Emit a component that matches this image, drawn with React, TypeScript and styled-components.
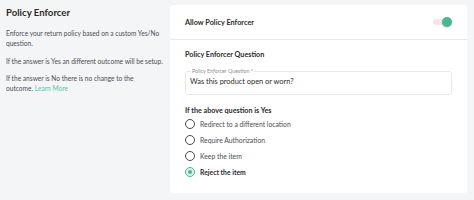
import styled, { createGlobalStyle } from "styled-components"

const colors = {
  page: "#f4f5f7",
  card: "#ffffff",
  text: "#2b2b2b",
  muted: "#4a4e54",
  border: "#e6e8eb",
  teal: "#46b896",
  tealSoft: "#dff3ec",
}

const GlobalStyle = createGlobalStyle`
  html, body {
    margin: 0;
    padding: 0;
    background: ${colors.page};
    font-family: "Lato", "Open Sans", sans-serif;
    color: ${colors.text};
  }
`

const Page = styled.div`
  width: 474px;
  height: 200px;
  display: flex;
  flex-direction: row;
  align-items: flex-start;
  padding: 5px 7px 0 6px;
  box-sizing: border-box;
  overflow: hidden;
`

const Intro = styled.div`
  width: 158px;
  padding-top: 2px;
  margin-right: 6px;
`

const IntroTitle = styled.h1`
  font-size: 9.6px;
  font-weight: 700;
  margin: 0 0 10px;
`

const IntroText = styled.p`
  font-size: 6.6px;
  line-height: 10px;
  color: ${colors.muted};
  margin: 0 0 7.5px;
  white-space: nowrap;
`

const LearnMore = styled.a`
  color: #5cc4a6;
  text-decoration: none;
`

const Card = styled.section`
  flex: 1;
  height: 188px;
  background: ${colors.card};
  border-radius: 3px;
  display: flex;
  flex-direction: column;
`

const CardHeader = styled.div`
  height: 34px;
  padding: 0 15px;
  display: flex;
  align-items: center;
  justify-content: space-between;
  border-bottom: 1px solid ${colors.border};
`

const HeaderTitle = styled.span`
  font-size: 7.3px;
  font-weight: 700;
`

const Toggle = styled.div`
  position: relative;
  width: 19px;
  height: 10px;
  display: flex;
  align-items: center;
`

const ToggleTrack = styled.div`
  width: 17px;
  height: 6px;
  border-radius: 3px;
  background: #f6e4e6;
`

const ToggleThumb = styled.div`
  position: absolute;
  right: 0;
  top: 0;
  width: 10px;
  height: 10px;
  border-radius: 50%;
  background: ${colors.teal};
  box-shadow: 0 1px 1px rgba(0, 0, 0, 0.15);
`

const CardBody = styled.div`
  padding: 10px 15px 0;
  display: flex;
  flex-direction: column;
`

const SectionTitle = styled.h2<{ $gap: number }>`
  font-size: 7.2px;
  font-weight: 700;
  margin: 0 0 ${(p) => p.$gap}px;
`

const Field = styled.fieldset`
  margin: 0 0 11px;
  padding: 0 4px 6px;
  border: 1px solid ${colors.border};
  border-radius: 3px;
  min-width: 0;
`

const FieldLabel = styled.legend`
  font-size: 5.3px;
  color: #8c9096;
  padding: 0 1px;
  margin-left: 1px;
`

const FieldValue = styled.div`
  font-size: 7.4px;
  color: ${colors.text};
  padding-top: 3px;
  height: 11px;
`

const RadioList = styled.div`
  display: flex;
  flex-direction: column;
  gap: 5.3px;
`

const RadioRow = styled.label<{ $checked?: boolean }>`
  display: flex;
  align-items: center;
  gap: 5px;
  height: 11px;
  font-size: 6.8px;
  font-weight: ${(p) => (p.$checked ? 700 : 400)};
  color: ${(p) => (p.$checked ? colors.text : colors.muted)};
`

const RadioDot = styled.span<{ $checked?: boolean }>`
  width: 10px;
  height: 10px;
  box-sizing: border-box;
  border-radius: 50%;
  border: 1.1px solid ${(p) => (p.$checked ? colors.teal : "#4a4a4a")};
  background: ${(p) => (p.$checked ? colors.tealSoft : "transparent")};
  display: flex;
  align-items: center;
  justify-content: center;

  &::after {
    content: "";
    width: 4px;
    height: 4px;
    border-radius: 50%;
    background: ${(p) => (p.$checked ? colors.teal : "transparent")};
  }
`

const options = [
  "Redirect to a different location",
  "Require Authorization",
  "Keep the item",
  "Reject the item",
]

export default function App() {
  const selected = "Reject the item"
  return (
    <>
      <GlobalStyle />
      <Page>
        <Intro>
          <IntroTitle>Policy Enforcer</IntroTitle>
          <IntroText>
            Enforce your return policy based on a custom Yes/No
            <br />
            question.
          </IntroText>
          <IntroText>
            If the answer is Yes an different outcome will be setup.
          </IntroText>
          <IntroText>
            If the answer is No there is no change to the
            <br />
            outcome. <LearnMore href="#">Learn More</LearnMore>
          </IntroText>
        </Intro>
        <Card>
          <CardHeader>
            <HeaderTitle>Allow Policy Enforcer</HeaderTitle>
            <Toggle>
              <ToggleTrack />
              <ToggleThumb />
            </Toggle>
          </CardHeader>
          <CardBody>
            <SectionTitle $gap={9}>Policy Enforcer Question</SectionTitle>
            <Field>
              <FieldLabel>Policy Enforcer Question *</FieldLabel>
              <FieldValue>Was this product open or worn?</FieldValue>
            </Field>
            <SectionTitle $gap={3}>If the above question is Yes</SectionTitle>
            <RadioList>
              {options.map((o) => (
                <RadioRow key={o} $checked={o === selected}>
                  <RadioDot $checked={o === selected} />
                  {o}
                </RadioRow>
              ))}
            </RadioList>
          </CardBody>
        </Card>
      </Page>
    </>
  )
}
